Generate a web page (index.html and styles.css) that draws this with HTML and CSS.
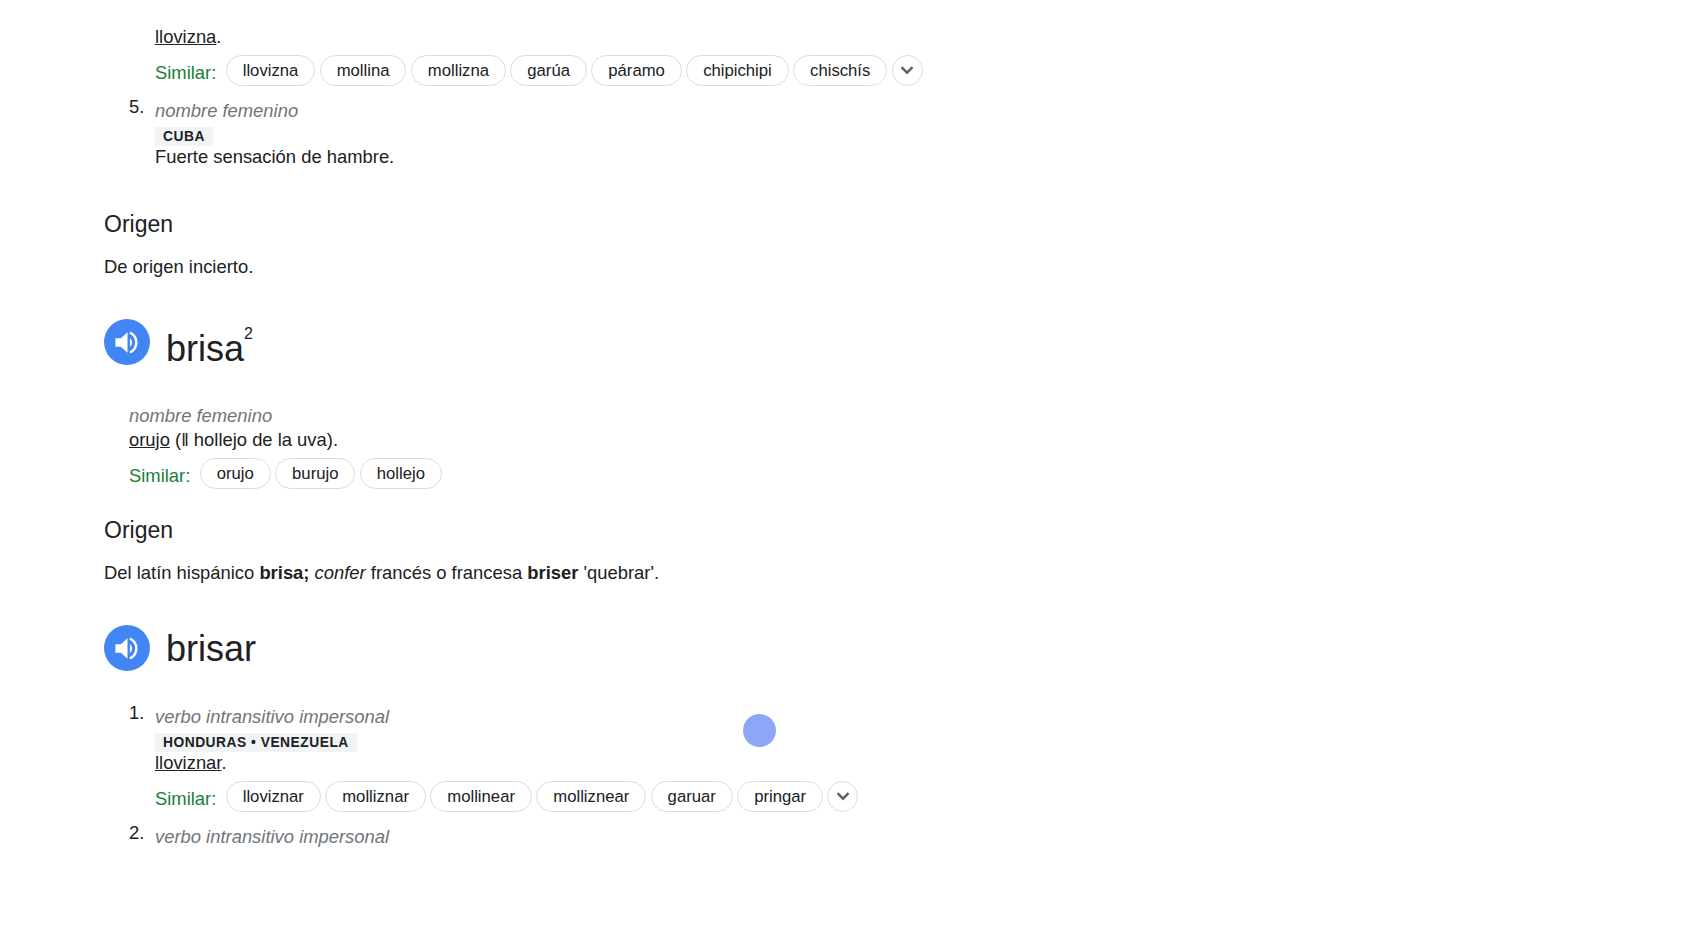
FILE: index.html
```html
<!DOCTYPE html>
<html lang="es">
<head>
<meta charset="UTF-8" />
<title>brisa</title>
<link rel="stylesheet" href="styles.css">
</head>
<body>
<div class="top-mask"></div>
<div class="page">
  <!-- resto de brisa 1 -->
  <ol class="senses senses-top">
    <li class="sense sense-similar">
      <div class="def"><a class="link">llovizna</a>.</div>
      <div class="similar">
        <span class="similar-label">Similar:</span>
        <span class="chip">llovizna</span>
        <span class="chip">mollina</span>
        <span class="chip">mollizna</span>
        <span class="chip">garúa</span>
        <span class="chip">páramo</span>
        <span class="chip">chipichipi</span>
        <span class="chip">chischís</span>
        <span class="chip chip-more"><svg width="14" height="9" viewBox="0 0 14 9"><path d="M1.500 1.200 7 6.700l5.500-5.500" fill="none" stroke="#5f6368" stroke-width="2.500"/></svg></span>
      </div>
    </li>
    <li class="sense">
      <span class="sense-num">5.</span>
      <div class="pos">nombre femenino</div>
      <div class="tag-row"><span class="tag">CUBA</span></div>
      <div class="def">Fuerte sensación de hambre.</div>
    </li>
  </ol>
  <h3 class="origin-title origin-first">Origen</h3>
  <p class="origin-text">De origen incierto.</p>

  <!-- brisa 2 -->
  <div class="entry-head">
    <span class="audio"><svg width="29" height="29" viewBox="0 0 24 24"><path d="M2 8.500h4.500L12 3.500v17l-5.500-5H2z" fill="#fff"/><path d="M14 8.200a5 5 0 0 1 0 7.600z" fill="#fff"/><path d="M14 3.800a9 9 0 0 1 0 16.400" fill="none" stroke="#fff" stroke-width="2"/></svg></span>
    <span class="word word-numbered">brisa<sup class="word-num">2</sup></span>
  </div>
  <div class="plain-sense">
    <div class="pos">nombre femenino</div>
    <div class="def"><a class="link">orujo</a> (ǁ hollejo de la uva).</div>
    <div class="similar">
      <span class="similar-label">Similar:</span>
      <span class="chip">orujo</span>
      <span class="chip">burujo</span>
      <span class="chip">hollejo</span>
    </div>
  </div>
  <h3 class="origin-title">Origen</h3>
  <p class="origin-text">Del latín hispánico <b>brisa;</b> <i>confer</i> francés o francesa <b>briser</b> 'quebrar'.</p>

  <!-- brisar -->
  <div class="entry-head">
    <span class="audio"><svg width="29" height="29" viewBox="0 0 24 24"><path d="M2 8.500h4.500L12 3.500v17l-5.500-5H2z" fill="#fff"/><path d="M14 8.200a5 5 0 0 1 0 7.600z" fill="#fff"/><path d="M14 3.800a9 9 0 0 1 0 16.400" fill="none" stroke="#fff" stroke-width="2"/></svg></span>
    <span class="word">brisar</span>
  </div>
  <ol class="senses senses-brisar">
    <li class="sense sense-similar">
      <span class="sense-num">1.</span>
      <div class="pos">verbo intransitivo impersonal</div>
      <div class="tag-row"><span class="tag">HONDURAS • VENEZUELA</span></div>
      <div class="def"><a class="link">lloviznar</a>.</div>
      <div class="similar">
        <span class="similar-label">Similar:</span>
        <span class="chip">lloviznar</span>
        <span class="chip">molliznar</span>
        <span class="chip">mollinear</span>
        <span class="chip">molliznear</span>
        <span class="chip">garuar</span>
        <span class="chip">pringar</span>
        <span class="chip chip-more"><svg width="14" height="9" viewBox="0 0 14 9"><path d="M1.500 1.200 7 6.700l5.500-5.500" fill="none" stroke="#5f6368" stroke-width="2.500"/></svg></span>
      </div>
    </li>
    <li class="sense">
      <span class="sense-num">2.</span>
      <div class="pos">verbo intransitivo impersonal</div>
    </li>
  </ol>
</div>
<!-- punto del cursor -->
<div class="cursor-dot"></div>
</body>
</html>
```

FILE: styles.css
```css
/* === base === */
html, body {
  margin: 0;
  padding: 0;
  height: 930px;
  overflow: hidden;
  background-color: #fff;
}
body {
  font-family: "Liberation Sans", Arial, sans-serif;
  font-size: 18.4px;
  line-height: 24px;
  color: #202124;
}
.page {
  padding-left: 104px;
  width: 1000px;
}
/* franja blanca que corta la primera línea */
.top-mask {
  position: absolute;
  top: 0;
  left: 0;
  width: 100%;
  height: 31px;
  background-color: #fff;
}
/* === listas de acepciones === */
.senses {
  list-style: none;
  margin: 0;
  padding: 0 0 0 51px;
}
.senses-top {
  padding-top: 26px;
}
.senses-brisar {
  margin-top: 34px;
}
.sense {
  position: relative;
}
.sense-similar {
  margin-bottom: 13px;
}
.sense-num {
  position: absolute;
  left: -26px;
  top: -4px;
}
.pos {
  font-style: italic;
  color: #70757a;
}
.tag-row {
  display: flex;
  margin-top: 4px;
}
.tag {
  background-color: #f1f3f4;
  font-size: 13.8px;
  font-weight: bold;
  letter-spacing: .5px;
  line-height: 19px;
  padding: 0 8px;
}
.def {
  line-height: 22px;
}
.link {
  color: #202124;
  text-decoration: underline;
}
/* === similares === */
.similar {
  display: flex;
  align-items: center;
  gap: 4.500px;
  margin-top: 7px;
}
.similar-label {
  color: #188038;
  margin-right: 5px;
  position: relative;
  top: 2px;
}
.chip {
  border: 1px solid #dadce0;
  border-radius: 16px;
  font-size: 16.700px;
  line-height: 29px;
  padding: 0 15.900px;
  white-space: nowrap;
}
.chip-more {
  display: flex;
  align-items: center;
  justify-content: center;
  width: 29px;
  height: 29px;
  padding: 0;
}
/* === origen === */
.origin-title {
  font-size: 23px;
  font-weight: normal;
  line-height: 32px;
  margin: 0;
}
.origin-first {
  margin-top: 40px;
}
.origin-text {
  margin: 15px 0 0;
}
/* === cabecera de palabra === */
.entry-head {
  display: flex;
  align-items: flex-start;
  gap: 16px;
  margin-top: 40px;
}
.audio {
  display: flex;
  align-items: center;
  justify-content: center;
  width: 46px;
  height: 46px;
  border-radius: 50%;
  background-color: #4285f4;
  flex-shrink: 0;
}
.word {
  font-size: 36px;
  line-height: 40px;
  padding-top: 4px;
}
.word-numbered {
  padding-top: 10px;
}
.word-num {
  font-size: 16px;
  line-height: 0;
  vertical-align: 22px;
}
.plain-sense {
  margin: 35px 0 25px 25px;
}
.plain-sense .pos {
  margin-bottom: 1px;
}
/* === punto del cursor === */
.cursor-dot {
  position: absolute;
  left: 743px;
  top: 714px;
  width: 33px;
  height: 33px;
  border-radius: 50%;
  background-color: #8ba7f5;
}
```
